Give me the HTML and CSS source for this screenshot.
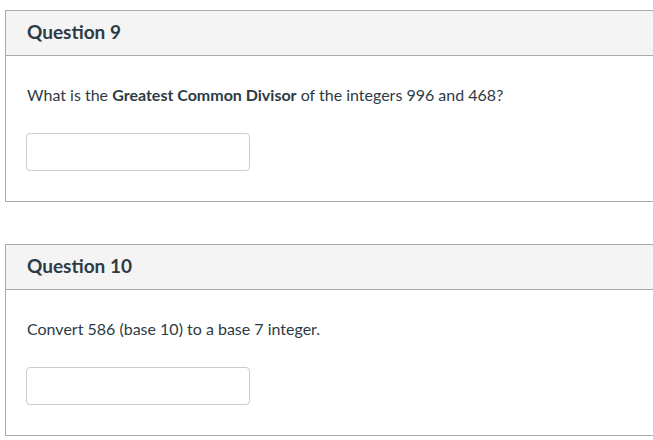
FILE: index.html
```html
<!DOCTYPE html>
<html>
<head>
<meta charset="utf-8">
<link rel="stylesheet" href="styles.css">
</head>
<body>
<div class="page">
  <section class="question">
    <header class="q-header">Question 9</header>
    <div class="q-body">
      <p class="q-text">What is the <strong>Greatest Common Divisor</strong> of the integers 996 and 468?</p>
      <input class="q-input" type="text">
    </div>
  </section>
  <section class="question">
    <header class="q-header">Question 10</header>
    <div class="q-body">
      <p class="q-text">Convert 586 (base 10) to a base 7 integer.</p>
      <input class="q-input" type="text">
    </div>
  </section>
</div>
</body>
</html>
```

FILE: styles.css
```css
html, body {
  margin: 0;
  padding: 0;
  overflow: hidden;
  background: #fff;
}
body {
  font-family: Lato, "Open Sans", sans-serif;
  color: #2d3b45;
}
.page {
  padding: 10px 0 0 5px;
  display: flex;
  flex-direction: column;
  gap: 42px;
}
.question {
  width: 720px;
  border: 1px solid #aaaaaa;
  background: #fff;
}
.q-header {
  height: 41px;
  padding: 0 0 3px 21px;
  display: flex;
  align-items: center;
  background: #f4f4f4;
  border-bottom: 1px solid #aaaaaa;
  font-size: 19px;
  font-weight: 700;
}
.q-body {
  padding: 29px 20px 30px 20px;
}
.q-text {
  margin: 0 0 28px 1px;
  font-size: 16px;
  line-height: 20px;
}
.q-text strong {
  font-weight: 700;
}
.q-input {
  display: block;
  box-sizing: border-box;
  width: 224px;
  height: 38px;
  margin: 0;
  border: 1px solid #c7cdd1;
  border-radius: 4px;
  background: #fff;
}
```
